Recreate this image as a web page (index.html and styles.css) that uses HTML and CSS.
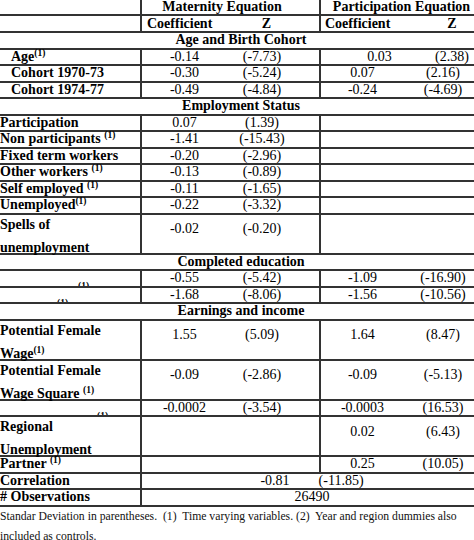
FILE: index.html
```html
<!DOCTYPE html>
<html>
<head>
<meta charset="utf-8">
<link rel="stylesheet" href="styles.css">
</head>
<body>
<div class="page">
  <div class="tbl">
    <div class="row h1">
      <div class="cell"></div>
      <div class="cell mhead">Maternity Equation</div>
      <div class="cell phead">Participation Equation</div>
    </div>
    <div class="row h2">
      <div class="cell"></div>
      <div class="cell mc hc">Coefficient</div>
      <div class="cell mz hz">Z</div>
      <div class="cell pc hc2">Coefficient</div>
      <div class="cell pz hz2">Z</div>
    </div>
    <div class="row"><div class="cell sec">Age and Birth Cohort</div></div>
    <div class="row">
      <div class="cell lab ind">Age<span class="sup">(1)</span></div>
      <div class="cell v mc">-0.14</div><div class="cell v mz">(-7.73)</div>
      <div class="cell v pc shift-c">0.03</div><div class="cell v pz shift-z">(2.38)</div>
    </div>
    <div class="row">
      <div class="cell lab ind">Cohort 1970-73</div>
      <div class="cell v mc">-0.30</div><div class="cell v mz">(-5.24)</div>
      <div class="cell v pc">0.07</div><div class="cell v pz">(2.16)</div>
    </div>
    <div class="row">
      <div class="cell lab ind">Cohort 1974-77</div>
      <div class="cell v mc">-0.49</div><div class="cell v mz">(-4.84)</div>
      <div class="cell v pc">-0.24</div><div class="cell v pz">(-4.69)</div>
    </div>
    <div class="row"><div class="cell sec">Employment Status</div></div>
    <div class="row">
      <div class="cell lab">Participation</div>
      <div class="cell v mc">0.07</div><div class="cell v mz">(1.39)</div>
      <div class="cell v pc"></div><div class="cell v pz"></div>
    </div>
    <div class="row">
      <div class="cell lab">Non participants <span class="sup">(1)</span></div>
      <div class="cell v mc">-1.41</div><div class="cell v mz">(-15.43)</div>
      <div class="cell v pc"></div><div class="cell v pz"></div>
    </div>
    <div class="row">
      <div class="cell lab">Fixed term workers</div>
      <div class="cell v mc">-0.20</div><div class="cell v mz">(-2.96)</div>
      <div class="cell v pc"></div><div class="cell v pz"></div>
    </div>
    <div class="row">
      <div class="cell lab">Other workers <span class="sup">(1)</span></div>
      <div class="cell v mc">-0.13</div><div class="cell v mz">(-0.89)</div>
      <div class="cell v pc"></div><div class="cell v pz"></div>
    </div>
    <div class="row">
      <div class="cell lab">Self employed <span class="sup">(1)</span></div>
      <div class="cell v mc">-0.11</div><div class="cell v mz">(-1.65)</div>
      <div class="cell v pc"></div><div class="cell v pz"></div>
    </div>
    <div class="row">
      <div class="cell lab">Unemployed<span class="sup">(1)</span></div>
      <div class="cell v mc">-0.22</div><div class="cell v mz">(-3.32)</div>
      <div class="cell v pc"></div><div class="cell v pz"></div>
    </div>
    <div class="row tall">
      <div class="cell lab two">Spells of<br>unemployment</div>
      <div class="cell v mc">-0.02</div><div class="cell v mz">(-0.20)</div>
      <div class="cell v pc"></div><div class="cell v pz"></div>
    </div>
    <div class="row"><div class="cell sec">Completed education</div></div>
    <div class="row">
      <div class="cell lab hid"><div class="peek pk1">(1)</div></div>
      <div class="cell v mc">-0.55</div><div class="cell v mz">(-5.42)</div>
      <div class="cell v pc">-1.09</div><div class="cell v pz">(-16.90)</div>
    </div>
    <div class="row">
      <div class="cell lab hid"><div class="peek pk2">(1)</div></div>
      <div class="cell v mc">-1.68</div><div class="cell v mz">(-8.06)</div>
      <div class="cell v pc">-1.56</div><div class="cell v pz">(-10.56)</div>
    </div>
    <div class="row"><div class="cell sec">Earnings and income</div></div>
    <div class="row tall">
      <div class="cell lab two">Potential Female<br>Wage<span class="sup">(1)</span></div>
      <div class="cell v mc">1.55</div><div class="cell v mz">(5.09)</div>
      <div class="cell v pc">1.64</div><div class="cell v pz">(8.47)</div>
    </div>
    <div class="row tall">
      <div class="cell lab two">Potential Female<br>Wage Square <span class="sup">(1)</span></div>
      <div class="cell v mc">-0.09</div><div class="cell v mz">(-2.86)</div>
      <div class="cell v pc">-0.09</div><div class="cell v pz">(-5.13)</div>
    </div>
    <div class="row">
      <div class="cell lab hid"><div class="peek pk3">(1)</div></div>
      <div class="cell v mc">-0.0002</div><div class="cell v mz">(-3.54)</div>
      <div class="cell v pc">-0.0003</div><div class="cell v pz">(16.53)</div>
    </div>
    <div class="row tall">
      <div class="cell lab two">Regional<br>Unemployment</div>
      <div class="cell v mc"></div><div class="cell v mz"></div>
      <div class="cell v pc">0.02</div><div class="cell v pz">(6.43)</div>
    </div>
    <div class="row">
      <div class="cell lab">Partner <span class="sup">(1)</span></div>
      <div class="cell v mc"></div><div class="cell v mz"></div>
      <div class="cell v pc">0.25</div><div class="cell v pz">(10.05)</div>
    </div>
    <div class="row">
      <div class="cell lab">Correlation</div>
      <div class="cell v wide"><span>-0.81</span><span class="gap">(-11.85)</span></div>
    </div>
    <div class="row">
      <div class="cell lab"># Observations</div>
      <div class="cell v wide">26490</div>
    </div>
  </div>
  <div class="note">Standar Deviation in parentheses.  (1)  Time varying variables. (2)  Year and region dummies also
included as controls.</div>
</div>
</body>
</html>
```

FILE: styles.css
```css
html, body {
  margin: 0;
  padding: 0;
  background: #fff;
}

body {
  font-family: "Liberation Serif", "Times New Roman", serif;
  font-size: 14px;
  color: #000;
}

.page {
  width: 474px;
  overflow: hidden;
}

.tbl {
  width: 482px;
}

.row {
  display: grid;
  grid-template-columns: 140px 87px 92px 85px 78px;
  grid-template-rows: minmax(0, 1fr);
  box-sizing: border-box;
  height: 16.5px;
  line-height: 14.5px;
  border-bottom: 2px solid #333;
}

.row.h1 {
  height: 16px;
  line-height: 14px;
}

.row.h2 {
  height: 17px;
  line-height: 15px;
}

.row.tall {
  height: 40px;
}

.cell {
  white-space: nowrap;
  min-width: 0;
}

.lab {
  font-weight: bold;
}

.ind {
  padding-left: 11px;
}

.two {
  line-height: 23px;
  margin-top: -2px;
}

.sup {
  font-size: 9.5px;
  line-height: 0;
  vertical-align: 5px;
  font-weight: bold;
}

.sec {
  grid-column: 1 / -1;
  text-align: center;
  font-weight: bold;
}

.mhead {
  grid-column: 2 / 4;
  border-left: 2px solid #333;
  text-align: center;
  font-weight: bold;
  padding-right: 17px;
}

.phead {
  grid-column: 4 / 6;
  border-left: 2px solid #333;
  text-align: center;
  font-weight: bold;
}

.mc,
.pc {
  border-left: 2px solid #333;
}

.hc {
  font-weight: bold;
  padding-left: 5px;
}

.hz {
  font-weight: bold;
  text-align: center;
  padding-right: 13px;
}

.hc2 {
  font-weight: bold;
  padding-left: 4px;
}

.hz2 {
  font-weight: bold;
  text-align: center;
  padding-left: 18px;
}

.v {
  display: flex;
  align-items: center;
  justify-content: center;
}

.tall .v {
  padding-bottom: 8px;
}

.v.mz {
  padding-right: 22px;
}

.shift-c {
  padding-left: 34px;
}

.shift-z {
  padding-left: 18px;
}

.wide {
  grid-column: 2 / -1;
  border-left: 2px solid #333;
}

.gap {
  margin-left: 29px;
}

.hid {
  overflow: hidden;
}

.peek {
  padding-top: 11px;
  font-size: 9.5px;
  line-height: 9.5px;
  font-weight: bold;
}

.pk1 {
  padding-left: 78px;
}

.pk2 {
  padding-left: 57px;
}

.pk3 {
  padding-left: 97px;
}

.note {
  font-size: 11.7px;
  line-height: 20px;
  white-space: pre;
  color: #111;
}
```
